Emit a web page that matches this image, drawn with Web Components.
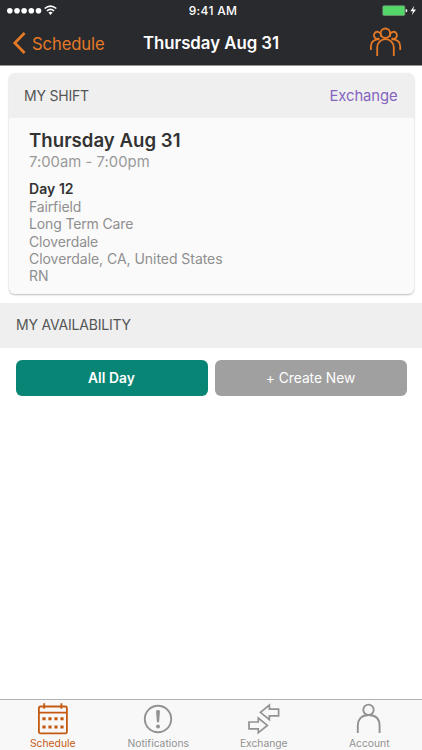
<!DOCTYPE html>
<html lang="en">
<head>
<meta charset="utf-8">
<title>Thursday Aug 31</title>
<style>
html,body{margin:0;height:100%}
body{font-family:Inter,"Liberation Sans",sans-serif;background:#fff;overflow:hidden}
</style>
</head>
<body>
<shift-screen></shift-screen>
<script>
const define = (name, markup) => {
  const t = document.createElement('template');
  t.innerHTML = markup;
  customElements.define(name, class extends HTMLElement {
    constructor() {
      super();
      this.attachShadow({mode: 'open'}).append(t.content.cloneNode(true));
    }
  });
};

define('status-bar', `<style>
:host{display:grid;grid-template-columns:1fr auto 1fr;align-items:center;height:22px;color:#fff;padding:0 5px 0 7px}
.time{font-size:12px;font-weight:500;letter-spacing:.3px;line-height:22px;margin-left:2px}
.left,.right{display:flex;align-items:center}
.right{justify-content:flex-end}
svg{display:block}
</style>
<div class="left"><svg width="52" height="22" viewBox="0 0 52 22" fill="#fff"><circle cx="2.8" cy="10.7" r="2.8"/><circle cx="10" cy="10.7" r="2.8"/><circle cx="17.1" cy="10.7" r="2.8"/><circle cx="24.3" cy="10.7" r="2.8"/><circle cx="31.5" cy="10.7" r="2.8"/><g fill="none" stroke="#fff" stroke-width="1.6"><path d="M37.7 8.5Q43.5 3.6 49.3 8.5"/><path d="M39.9 10.8Q43.5 7.8 47.1 10.8"/></g><path d="M41.4 12.5Q43.5 10.9 45.6 12.5L43.5 14.9Z"/></svg></div>
<span class="time">9:41 AM</span>
<div class="right"><svg width="35" height="22" viewBox="0 0 35 22"><rect x=".8" y="5.8" width="22" height="9.6" rx="1.2" fill="#53d769" stroke="#7b9b80" stroke-width=".7"/><path d="M23.7 9v3.4q1.7-.4 1.7-1.7T23.7 9Z" fill="#fff"/><path d="M32.2 5.8L28.4 11.3H31L29.7 15.2L34 9.6H31.2Z" fill="#fff"/></svg></div>`);

define('nav-bar', `<style>
:host{display:grid;grid-template-columns:1fr auto 1fr;align-items:center;height:42px;padding:0 12px;color:#e67925}
.back{display:flex;align-items:center;gap:6px;font-size:16.6px;letter-spacing:-.08px}
.back span{padding-top:1px}
.title{color:#fff;font-size:16.8px;font-weight:600;letter-spacing:-.02px}
.people{justify-self:end;margin-right:8px}
svg{display:block}
</style>
<div class="back"><svg width="14" height="24" viewBox="0 0 14 24" fill="none" stroke="currentColor" stroke-width="2.7"><path d="M12.6 2L2.8 12L12.6 22"/></svg><span>Schedule</span></div>
<span class="title"><slot></slot></span>
<svg class="people" width="33" height="42" viewBox="369 22 33 42" fill="none" stroke="currentColor" stroke-width="1.8"><circle cx="385.4" cy="33.2" r="4.7"/><path d="M377.2 56V47.5A8.3 8.3 0 0 1 393.8 47.5V56"/><path d="M380.6 36.8A3.5 3.5 0 1 0 379.2 38.3M390.3 36.8A3.5 3.5 0 1 1 391.7 38.3"/><path d="M370.9 50V46.5Q371 40.3 377.2 39.4H379.5M400.2 50V46.5Q400.1 40.3 393.9 39.4H391.5"/></svg>`);

define('section-head', `<style>
:host{display:flex;align-items:center;justify-content:space-between;box-sizing:border-box;height:45px;background:#efefef;color:#555;font-size:14px;padding:0 16px 2px;letter-spacing:-.2px}
::slotted(a){color:#8464bf;font-size:14.8px;letter-spacing:-.08px}
</style><span class="h"><slot></slot></span><slot name="action"></slot>`);

define('shift-card', `<style>
:host{display:block;box-sizing:border-box;height:221px;margin:7px 8.5px 0 8.5px;border-radius:6px;background:#fafafa;overflow:hidden;box-shadow:0 1px 2px #0004}
section-head{padding:0 16px 0 15.5px}
section-head a{padding-top:1px}
.body{padding:10px 20.5px}
h2{margin:0;font-size:18.6px;line-height:24px;font-weight:600;color:#333;letter-spacing:.03px}
.hours{font-size:14.8px;line-height:18px;color:#999;padding-top:1px;letter-spacing:.04px}
.rows{margin-top:9.3px;font-size:14px;line-height:17.4px;color:#8f8f8f;letter-spacing:-.04px}
.tight{letter-spacing:-.14px}
b{font-weight:600;color:#333;letter-spacing:.05px}
</style>
<section-head><span>MY SHIFT</span><a slot="action">Exchange</a></section-head>
<div class="body"><h2>Thursday Aug 31</h2><div class="hours">7:00am - 7:00pm</div>
<div class="rows"><div><b>Day 12</b></div><div class="tight">Fairfield</div><div class="tight">Long Term Care</div><div class="tight">Cloverdale</div><div>Cloverdale, CA, United States</div><div>RN</div></div></div>`);

define('action-button', `<style>
:host{display:flex;align-items:center;justify-content:center;box-sizing:border-box;height:36px;border-radius:6px;background:#a0a0a0;color:#fff;font-size:13.8px;letter-spacing:-.03px}
:host([primary]){background:#088574;font-weight:600;letter-spacing:.08px}
</style><span><slot></slot></span>`);

define('tab-item', `<style>
:host{display:flex;flex-direction:column;align-items:center;color:#929292;font-size:10.3px;line-height:12px}
:host([active]){color:#c45a11}
::slotted(svg){display:block;width:36px;height:36px;margin-bottom:1px}
</style><slot name="icon"></slot><span><slot></slot></span>`);

define('tab-bar', `<style>
:host{display:grid;grid-template-columns:repeat(4,1fr);box-sizing:border-box;height:51px;border-top:1px solid #b2b2b2;background:#f8f8f8}
svg{fill:none;stroke:currentColor}
</style>
<tab-item active><svg slot="icon" viewBox="0 0 36 36" stroke-width="1.8"><rect x="3.9" y="6.5" width="28" height="26.9" rx="1.5"/><path d="M4 12.6H32M9.2 3.3V8.8M26.4 3.3V8.8"/><path d="M7.4 18.7H28.6M7.4 27H28.6" stroke-width="3" stroke-dasharray="3.2 2.8"/></svg>Schedule</tab-item>
<tab-item><svg slot="icon" viewBox="0 0 36 36"><circle cx="18" cy="19" r="13.2" stroke-width="1.9"/><path d="M16 10.7Q18 9.4 20 10.7L19.1 22.3H16.9Z" fill="currentColor" stroke="none"/><circle cx="18" cy="26.6" r="2" fill="currentColor" stroke="none"/></svg>Notifications</tab-item>
<tab-item><svg slot="icon" viewBox="0 0 36 36" stroke-width="1.7"><path d="M14.4 12.3L23.4 5V9.1H32.6V15.8H23.4V19.6Z"/><path d="M21.3 25.4L12.3 18.1V22H3V28.8H12.3V32.8Z"/></svg>Exchange</tab-item>
<tab-item><svg slot="icon" viewBox="0 0 36 36" stroke-width="1.9"><circle cx="17.5" cy="9.8" r="5.2"/><path d="M6.8 33V26C6.8 19 10.8 15 17.7 15S28.6 19 28.6 26V33"/></svg>Account</tab-item>`);

define('shift-screen', `<style>
:host{display:flex;flex-direction:column;height:750px;width:422px}
header{background:#292a2e;height:65px;border-bottom:1px solid #949494}
.avail{margin-top:9px}
.actions{display:grid;grid-template-columns:1fr 1fr;gap:7px;padding:11.5px 15.5px 0}
tab-bar{margin-top:auto}
</style>
<header><status-bar></status-bar><nav-bar>Thursday Aug 31</nav-bar></header>
<shift-card></shift-card>
<section-head class="avail">MY AVAILABILITY</section-head>
<div class="actions"><action-button primary>All Day</action-button><action-button>+ Create New</action-button></div>
<tab-bar></tab-bar>`);
</script>
</body>
</html>
